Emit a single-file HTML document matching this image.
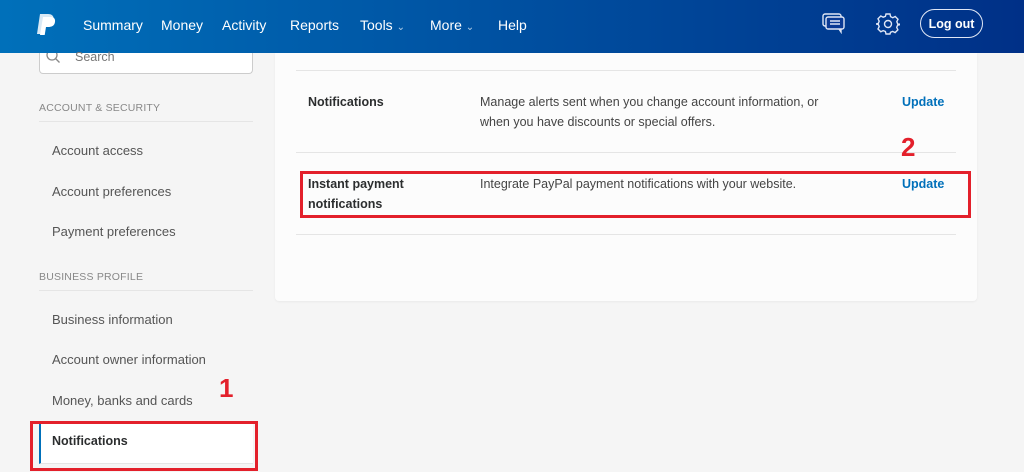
<!DOCTYPE html>
<html><head><style>
*{margin:0;padding:0;box-sizing:border-box}
body{width:1024px;height:472px;overflow:hidden;background:#f5f5f5;font-family:"Liberation Sans",sans-serif;position:relative;color:#2c2e2f}
.hdr{position:absolute;left:0;top:0;width:1024px;height:53px;background:linear-gradient(90deg,#0070ba,#003087)}
.nav{position:absolute;top:17px;color:#fff;font-size:14px}
.abs{position:absolute}
.side{font-size:13px;color:#555}
.sec{font-size:10.5px;color:#888;letter-spacing:.2px}
.hr{position:absolute;height:1px;background:#e5e5e5}
.card{position:absolute;left:275px;top:53px;width:702px;height:248px;background:#fcfcfc;border-radius:0 0 4px 4px;box-shadow:0 1px 2px rgba(0,0,0,.05)}
.b{font-weight:bold;font-size:12.5px;color:#2c2e2f}
.d{font-size:12.5px;color:#444;line-height:20px}
.u{font-weight:bold;font-size:12.5px;color:#0070ba}
.red{position:absolute;border:3px solid #e3202b}
.num{position:absolute;color:#e3202b;font-weight:bold;font-size:26px}
</style></head><body>
<div class="hdr">
<svg class="abs" style="left:36px;top:13px" width="20" height="24" viewBox="0 0 20 24"><path d="M4 1h8c4 0 6 2 5.5 5.5C17 11 14 12 10 12H8l-1.5 9H1z" fill="#fff" opacity=".85"/><path d="M7 4h8c3 0 4.5 2 4 5-.6 4-3.5 5-7 5h-2l-1.3 8H4z" fill="#fff"/></svg>
<div class="nav" style="left:83px">Summary</div>
<div class="nav" style="left:161px">Money</div>
<div class="nav" style="left:222px">Activity</div>
<div class="nav" style="left:290px">Reports</div>
<div class="nav" style="left:360px">Tools <span style="font-size:10px;opacity:.7">&#8964;</span></div>
<div class="nav" style="left:430px">More <span style="font-size:10px;opacity:.7">&#8964;</span></div>
<div class="nav" style="left:498px">Help</div>
<svg class="abs" style="left:822px;top:12px" width="24" height="22" viewBox="0 0 24 22" fill="none" stroke="#dfe6f5" stroke-width="1.4"><rect x="1" y="2" width="18" height="12" rx="2"/><rect x="4" y="5" width="18" height="12" rx="2" fill="#0a3a94"/><path d="M8 9h10M8 12h10M17 17l2 3v-3"/></svg>
<svg class="abs" style="left:876px;top:12px" width="24" height="24" viewBox="0 0 24 24" fill="none" stroke="#dfe6f5" stroke-width="1.4"><circle cx="12" cy="12" r="3.5"/><path d="M10 2h4l.6 2.6 2.2 1.1 2.4-1.2 2.8 2.8-1.2 2.4.9 2.2L24 12.6v-1.2 1.2l-2.4.6-.9 2.2 1.2 2.4-2.8 2.8-2.4-1.2-2.2.9L14 22h-4l-.6-2.5-2.2-.9-2.4 1.2L2 17l1.2-2.4-.9-2.2L0 12v0l2.3-.6.9-2.2L2 6.8 4.8 4l2.4 1.2L9.4 4.3z"/></svg>
<div class="abs" style="left:920px;top:9px;width:63px;height:29px;border:1.5px solid #dfe6f5;border-radius:15px;color:#fff;font-weight:bold;font-size:12.5px;text-align:center;line-height:28px">Log out</div>
</div>
<div class="abs" style="left:39px;top:53px;width:214px;height:21px;background:#fff;border:1px solid #ccc;border-top:none;border-radius:0 0 4px 4px"></div>
<svg class="abs" style="left:46px;top:53px" width="16" height="12" viewBox="0 0 16 12" fill="none" stroke="#888" stroke-width="1.3"><circle cx="6" cy="2" r="5"/><path d="M9.5 5.5l4 4"/></svg>
<div class="abs side" style="left:75px;top:50px;color:#777;font-size:12.5px">Search</div>
<div class="abs sec" style="left:39px;top:102px">ACCOUNT &amp; SECURITY</div>
<div class="hr" style="left:39px;top:121px;width:214px"></div>
<div class="abs side" style="left:52px;top:143px">Account access</div>
<div class="abs side" style="left:52px;top:184px">Account preferences</div>
<div class="abs side" style="left:52px;top:224px">Payment preferences</div>
<div class="abs sec" style="left:39px;top:271px">BUSINESS PROFILE</div>
<div class="hr" style="left:39px;top:290px;width:214px"></div>
<div class="abs side" style="left:52px;top:312px">Business information</div>
<div class="abs side" style="left:52px;top:352px">Account owner information</div>
<div class="abs side" style="left:52px;top:393px">Money, banks and cards</div>
<div class="abs" style="left:39px;top:422px;width:214px;height:42px;background:#fff;border-left:2px solid #0070ba;border-bottom:1px solid #e5e5e5"></div>
<div class="abs b" style="left:52px;top:434px">Notifications</div>
<div class="red" style="left:30px;top:421px;width:228px;height:50px"></div>
<div class="num" style="left:219px;top:373px">1</div>
<div class="card"></div>
<div class="hr" style="left:296px;top:70px;width:660px"></div>
<div class="abs b" style="left:308px;top:95px">Notifications</div>
<div class="abs d" style="left:480px;top:92px">Manage alerts sent when you change account information, or<br>when you have discounts or special offers.</div>
<div class="abs u" style="left:902px;top:95px">Update</div>
<div class="hr" style="left:296px;top:152px;width:660px"></div>
<div class="abs b" style="left:308px;top:174px;line-height:20px">Instant payment<br>notifications</div>
<div class="abs d" style="left:480px;top:174px">Integrate PayPal payment notifications with your website.</div>
<div class="abs u" style="left:902px;top:177px">Update</div>
<div class="red" style="left:300px;top:171px;width:671px;height:47px"></div>
<div class="num" style="left:901px;top:132px">2</div>
<div class="hr" style="left:296px;top:234px;width:660px"></div>
</body></html>
